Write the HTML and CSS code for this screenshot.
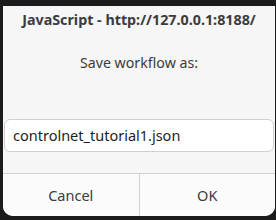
FILE: index.html
```html
<!DOCTYPE html>
<html>
<head>
<meta charset="utf-8">
<link rel="stylesheet" href="styles.css">
</head>
<body>
<div class="screen">
  <div class="dialog">
    <div class="title">JavaScript - http://127.0.0.1:8188/</div>
    <div class="message">Save workflow as:</div>
    <div class="field">controlnet_tutorial1.json</div>
    <div class="buttons">
      <div class="btn">Cancel</div>
      <div class="btn">OK</div>
    </div>
  </div>
</div>
</body>
</html>
```
FILE: styles.css
```css
html, body {
  margin: 0;
  padding: 0;
  background: #1b1b1b;
}
.screen {
  width: 276px;
  height: 220px;
  padding: 6px 1px 4px 3px;
  box-sizing: border-box;
}
.dialog {
  height: 210px;
  background: #f6f6f6;
  border-radius: 0 0 10px 10px;
  display: flex;
  flex-direction: column;
  font-family: "Noto Sans", "Open Sans", sans-serif;
  color: #3c3c3c;
  overflow: hidden;
}
.title {
  height: 28px;
  line-height: 28px;
  text-align: center;
  font-weight: bold;
  font-size: 14.3px;
}
.message {
  margin-top: 17px;
  line-height: 24px;
  text-align: center;
  font-size: 14.2px;
}
.field {
  margin: 44px 1px 0 1px;
  height: 33px;
  box-sizing: border-box;
  border: 1px solid #cfcfcf;
  border-radius: 6px;
  background: #ffffff;
  padding-left: 8px;
  line-height: 31px;
  font-size: 14.5px;
  color: #1e1e1e;
}
.buttons {
  margin-top: 21px;
  border-top: 1px solid #d2d2d2;
  display: flex;
  flex: 1;
  background: #fbfbfb;
}
.btn {
  flex: 1;
  display: flex;
  align-items: center;
  justify-content: center;
  font-size: 14.5px;
}
.btn + .btn {
  border-left: 1px solid #d2d2d2;
}
```
